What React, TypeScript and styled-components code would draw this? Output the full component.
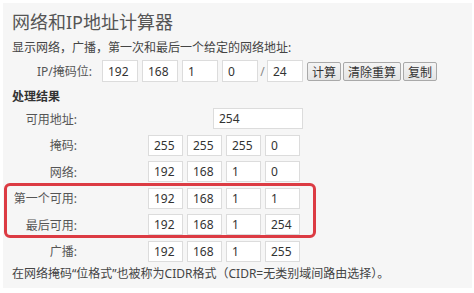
import { FC } from 'react';
import styled, { createGlobalStyle } from 'styled-components';

// ----------------------------------------------------------------------------

const GlobalStyle = createGlobalStyle`
  html, body {
    margin: 0;
    padding: 0;
    background: #ffffff;
  }

  body {
    font-family: "Noto Sans", "Noto Sans CJK SC", sans-serif;
    font-size: 12px;
    color: #444;
  }
`;

// ----------------------------------------------------------------------------

interface ResultRowData {
  label: string;
  values: string[];
}

const ipParts = ['192', '168', '1', '0'];

const resultRows: ResultRowData[] = [
  { label: '掩码:', values: ['255', '255', '255', '0'] },
  { label: '网络:', values: ['192', '168', '1', '0'] },
];

const highlightRows: ResultRowData[] = [
  { label: '第一个可用:', values: ['192', '168', '1', '1'] },
  { label: '最后可用:', values: ['192', '168', '1', '254'] },
];

const broadcastRow: ResultRowData = {
  label: '广播:',
  values: ['192', '168', '1', '255'],
};

// ----------------------------------------------------------------------------

const Panel = styled.div`
  margin: 3px 2px 5px 3px;
  padding: 5px 9px 5px 9px;
  background: #f6f6f6;
`;

const Title = styled.h1`
  margin: 0;
  font-size: 18px;
  font-weight: 400;
  line-height: 28px;
  color: #555;
`;

const Subtitle = styled.p`
  margin: 3px 0 0;
  line-height: 18px;
  color: #444;
`;

const IpRow = styled.div`
  display: flex;
  align-items: center;
  margin-top: 3px;
  height: 22px;
`;

const IpLabel = styled.label`
  width: 80px;
  text-align: right;
  color: #555;
  margin-right: 10px;
`;

const Fields = styled.div<{ $offset?: number; $end?: boolean }>`
  display: flex;
  gap: 4px;
  margin-left: ${(p) => p.$offset ?? 0}px;
  width: ${(p) => (p.$end ? '155px' : 'auto')};
  justify-content: ${(p) => (p.$end ? 'flex-end' : 'flex-start')};
`;

const Field = styled.input<{ $w?: number; $h?: number }>`
  box-sizing: border-box;
  width: ${(p) => p.$w ?? 36}px;
  height: ${(p) => p.$h ?? 22}px;
  margin: 0;
  padding: 0 5px;
  border: 1px solid #dcdcdc;
  background: #fff;
  font-family: "Noto Sans", "Noto Sans CJK SC", sans-serif;
  font-size: 12px;
  color: #333;
  outline: none;
`;

const Slash = styled.span`
  width: 9px;
  text-align: center;
  color: #888;
`;

const Buttons = styled.div`
  display: flex;
  gap: 2px;
  margin-left: 4px;
`;

const Button = styled.button`
  box-sizing: border-box;
  height: 19px;
  margin: 0;
  padding: 0 4px;
  border: 1px solid #a9a9a9;
  border-radius: 2px;
  background: linear-gradient(#f4f4f4, #e4e4e4);
  font-family: "Noto Sans CJK SC", sans-serif;
  font-size: 12px;
  line-height: 17px;
  color: #333;
`;

const Heading = styled.h2`
  margin: 6px 0 0;
  font-size: 12px;
  font-weight: 700;
  line-height: 18px;
  color: #333;
`;

const Results = styled.div`
  display: flex;
  flex-direction: column;
  gap: 5.5px;
  margin-top: 2px;
`;

const Highlight = styled.div`
  position: relative;
  display: flex;
  flex-direction: column;
  gap: 5.5px;

  &::after {
    content: '';
    position: absolute;
    left: -8px;
    top: -4.5px;
    width: 312px;
    bottom: -3px;
    box-sizing: border-box;
    border: 3px solid #dc3b43;
    border-radius: 6px;
    pointer-events: none;
  }
`;

const Row = styled.div`
  display: flex;
  align-items: center;
  height: 21px;
`;

const RowLabel = styled.span`
  width: 65px;
  text-align: right;
  color: #555;
`;

const Note = styled.p`
  margin: 3.5px 0 0;
  line-height: 18px;
  color: #444;
`;

// ----------------------------------------------------------------------------

const ResultRow: FC<{ data: ResultRowData }> = ({ data }) => (
  <Row>
    <RowLabel>{data.label}</RowLabel>
    <Fields $offset={71}>
      {data.values.map((v, i) => (
        <Field key={i} $w={35} $h={21} value={v} readOnly />
      ))}
    </Fields>
  </Row>
);

const App: FC = () => {
  return (
    <>
      <GlobalStyle />
      <Panel>
        <Title>网络和IP地址计算器</Title>
        <Subtitle>显示网络，广播，第一次和最后一个给定的网络地址:</Subtitle>

        <IpRow>
          <IpLabel>IP/掩码位:</IpLabel>
          <Fields>
            {ipParts.map((v, i) => (
              <Field key={i} value={v} readOnly />
            ))}
          </Fields>
          <Slash>/</Slash>
          <Field value="24" readOnly />
          <Buttons>
            <Button>计算</Button>
            <Button>清除重算</Button>
            <Button>复制</Button>
          </Buttons>
        </IpRow>

        <Heading>处理结果</Heading>

        <Results>
          <Row>
            <RowLabel>可用地址:</RowLabel>
            <Fields $offset={71} $end>
              <Field $w={90} $h={21} value="254" readOnly />
            </Fields>
          </Row>
          {resultRows.map((r) => (
            <ResultRow key={r.label} data={r} />
          ))}
          <Highlight>
            {highlightRows.map((r) => (
              <ResultRow key={r.label} data={r} />
            ))}
          </Highlight>
          <ResultRow data={broadcastRow} />
        </Results>

        <Note>在网络掩码“位格式”也被称为CIDR格式（CIDR=无类别域间路由选择）。</Note>
      </Panel>
    </>
  );
};

export default App;
